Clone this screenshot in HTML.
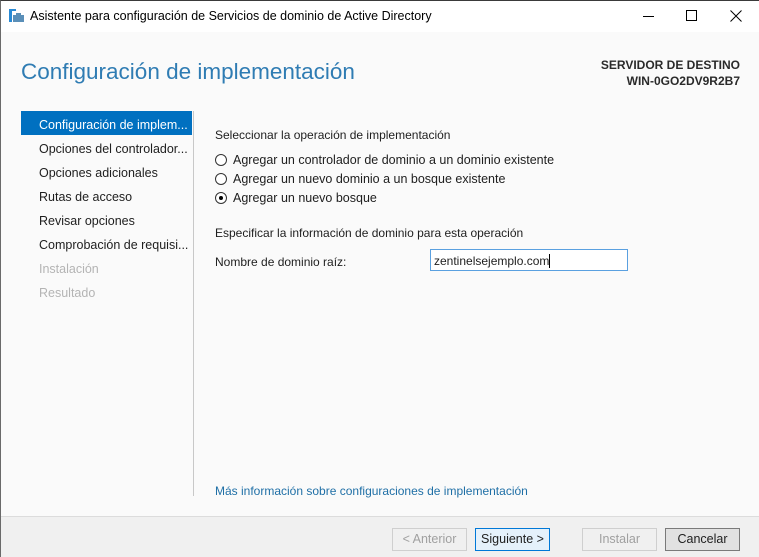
<!DOCTYPE html>
<html><head><meta charset="utf-8"><style>
*{margin:0;padding:0;box-sizing:border-box}
body{width:759px;height:557px;overflow:hidden;background:#fafafa;font-family:"Liberation Sans",sans-serif;font-size:12px;color:#1e1e1e;position:relative}
.a{position:absolute;white-space:nowrap}
#frame{position:absolute;left:0;top:0;width:759px;height:557px;border-top:1px solid #3a3a3a;border-left:1px solid #6a6a6a;pointer-events:none}
#title{position:absolute;left:0;top:0;width:759px;height:32px;background:#fff}
.nav{position:absolute;left:39px;font-size:12.5px;color:#1e1e1e}
.dis{color:#b4b4b4}
.radio{position:absolute;left:215px;width:12px;height:12px;border:1px solid #333;border-radius:50%;background:#fff}
.btn{position:absolute;top:528px;width:75px;height:23px;border:1px solid #adadad;background:#e1e1e1;text-align:center;line-height:21px;font-size:12.5px}
</style></head><body>
<div id="title">
<svg class="a" style="left:9px;top:9px" width="16" height="14"><rect x="0" y="0" width="3" height="13" fill="#2a8ad4"/><rect x="0" y="0" width="7" height="2" fill="#2a8ad4"/><rect x="4" y="6" width="11" height="7" fill="#5a8fb8"/><rect x="7" y="4" width="5" height="2" fill="#5a8fb8"/></svg>
<div class="a" style="left:30px;top:9px;font-size:12.5px;color:#000">Asistente para configuración de Servicios de dominio de Active Directory</div>
<div class="a" style="left:643px;top:16px;width:11px;height:1px;background:#000"></div>
<div class="a" style="left:686px;top:10px;width:11px;height:11px;border:1px solid #000"></div>
<svg class="a" style="left:730px;top:10px" width="12" height="12"><path d="M0.5 0.5L11.5 11.5M11.5 0.5L0.5 11.5" stroke="#000" stroke-width="1"/></svg>
</div>
<div class="a" style="left:21px;top:59px;font-size:22.5px;color:#2f7cb3;font-weight:normal">Configuración de implementación</div>
<div class="a" style="right:19px;top:57px;text-align:right;font-size:12px;font-weight:bold;color:#2a2a2a;line-height:16px">SERVIDOR DE DESTINO<br>WIN-0GO2DV9R2B7</div>
<div class="a" style="left:21px;top:111px;width:171px;height:24px;background:#0070c0"></div>
<div class="nav" style="top:118px;color:#fff">Configuración de implem...</div>
<div class="nav" style="top:142px">Opciones del controlador...</div>
<div class="nav" style="top:166px">Opciones adicionales</div>
<div class="nav" style="top:190px">Rutas de acceso</div>
<div class="nav" style="top:214px">Revisar opciones</div>
<div class="nav" style="top:238px">Comprobación de requisi...</div>
<div class="nav dis" style="top:262px">Instalación</div>
<div class="nav dis" style="top:286px">Resultado</div>
<div class="a" style="left:193px;top:111px;width:1px;height:385px;background:#c8c8c8"></div>
<div class="a" style="left:215px;top:128px">Seleccionar la operación de implementación</div>
<div class="radio" style="top:154px"></div><div class="a" style="left:233px;top:153px;font-size:12.5px">Agregar un controlador de dominio a un dominio existente</div>
<div class="radio" style="top:173px"></div><div class="a" style="left:233px;top:172px;font-size:12.5px">Agregar un nuevo dominio a un bosque existente</div>
<div class="radio" style="top:192px"></div><div class="a" style="left:219px;top:196px;width:4px;height:4px;border-radius:50%;background:#000"></div><div class="a" style="left:233px;top:191px;font-size:12.5px">Agregar un nuevo bosque</div>
<div class="a" style="left:215px;top:226px">Especificar la información de dominio para esta operación</div>
<div class="a" style="left:215px;top:255px">Nombre de dominio raíz:</div>
<div class="a" style="left:430px;top:249px;width:198px;height:22px;border:1px solid #5aa0e0;background:#fff;padding:4px 3px;font-size:12px">zentinelsejemplo.com<span style="border-left:1px solid #000"></span></div>
<div class="a" style="left:215px;top:484px;color:#1f6fa6">Más información sobre configuraciones de implementación</div>
<div class="a" style="left:0;top:516px;width:759px;height:41px;background:#f0f0f0;border-top:1px solid #dcdcdc"></div>
<div class="btn" style="left:392px;color:#a0a0a0;border-color:#cfcfcf;background:#f0f0f0">&lt; Anterior</div>
<div class="btn" style="left:475px;border-color:#0078d7;background:#e5f1fb">Siguiente &gt;</div>
<div class="btn" style="left:582px;color:#a0a0a0;border-color:#cfcfcf;background:#f0f0f0">Instalar</div>
<div class="btn" style="left:665px;border-color:#7a7a7a;background:#e1e1e1">Cancelar</div>
<div id="frame"></div>
</body></html>
